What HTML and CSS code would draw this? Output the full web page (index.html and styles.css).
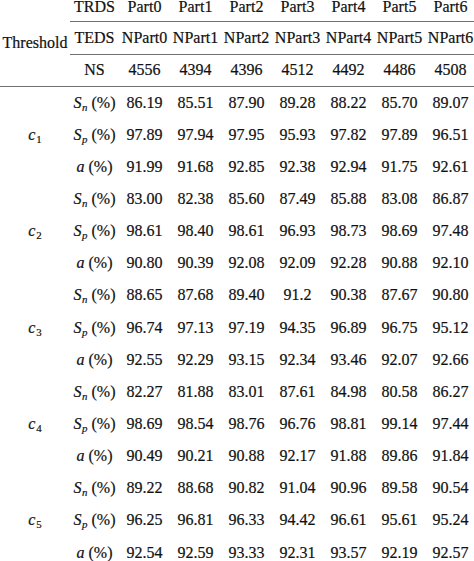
FILE: index.html
```html
<!DOCTYPE html>
<html lang="en">
<head>
<meta charset="utf-8">
<title>Threshold results</title>
<link rel="stylesheet" href="styles.css">
</head>
<body>
<table class="results">
  <colgroup>
    <col class="c-thr">
    <col class="c-lab">
    <col class="c-val"><col class="c-val"><col class="c-val"><col class="c-val"><col class="c-val"><col class="c-val"><col class="c-val">
  </colgroup>
  <thead>
    <tr class="h1">
      <th rowspan="3" class="thr">Threshold</th>
      <td>TRDS</td><td>Part0</td><td>Part1</td><td>Part2</td><td>Part3</td><td>Part4</td><td>Part5</td><td>Part6</td>
    </tr>
    <tr class="h2">
      <td>TEDS</td><td>NPart0</td><td>NPart1</td><td>NPart2</td><td>NPart3</td><td>NPart4</td><td>NPart5</td><td>NPart6</td>
    </tr>
    <tr class="h3">
      <td>NS</td><td>4556</td><td>4394</td><td>4396</td><td>4512</td><td>4492</td><td>4486</td><td>4508</td>
    </tr>
  </thead>
  <tbody>
    <tr><th rowspan="3" class="grp"><i>c</i><sub class="num">1</sub></th><td><i>S</i><sub class="ital">n</sub> (%)</td><td>86.19</td><td>85.51</td><td>87.90</td><td>89.28</td><td>88.22</td><td>85.70</td><td>89.07</td></tr>
    <tr><td><i>S</i><sub class="ital">p</sub> (%)</td><td>97.89</td><td>97.94</td><td>97.95</td><td>95.93</td><td>97.82</td><td>97.89</td><td>96.51</td></tr>
    <tr><td><i>a</i> (%)</td><td>91.99</td><td>91.68</td><td>92.85</td><td>92.38</td><td>92.94</td><td>91.75</td><td>92.61</td></tr>

    <tr><th rowspan="3" class="grp"><i>c</i><sub class="num">2</sub></th><td><i>S</i><sub class="ital">n</sub> (%)</td><td>83.00</td><td>82.38</td><td>85.60</td><td>87.49</td><td>85.88</td><td>83.08</td><td>86.87</td></tr>
    <tr><td><i>S</i><sub class="ital">p</sub> (%)</td><td>98.61</td><td>98.40</td><td>98.61</td><td>96.93</td><td>98.73</td><td>98.69</td><td>97.48</td></tr>
    <tr><td><i>a</i> (%)</td><td>90.80</td><td>90.39</td><td>92.08</td><td>92.09</td><td>92.28</td><td>90.88</td><td>92.10</td></tr>

    <tr><th rowspan="3" class="grp"><i>c</i><sub class="num">3</sub></th><td><i>S</i><sub class="ital">n</sub> (%)</td><td>88.65</td><td>87.68</td><td>89.40</td><td>91.2</td><td>90.38</td><td>87.67</td><td>90.80</td></tr>
    <tr><td><i>S</i><sub class="ital">p</sub> (%)</td><td>96.74</td><td>97.13</td><td>97.19</td><td>94.35</td><td>96.89</td><td>96.75</td><td>95.12</td></tr>
    <tr><td><i>a</i> (%)</td><td>92.55</td><td>92.29</td><td>93.15</td><td>92.34</td><td>93.46</td><td>92.07</td><td>92.66</td></tr>

    <tr><th rowspan="3" class="grp"><i>c</i><sub class="num">4</sub></th><td><i>S</i><sub class="ital">n</sub> (%)</td><td>82.27</td><td>81.88</td><td>83.01</td><td>87.61</td><td>84.98</td><td>80.58</td><td>86.27</td></tr>
    <tr><td><i>S</i><sub class="ital">p</sub> (%)</td><td>98.69</td><td>98.54</td><td>98.76</td><td>96.76</td><td>98.81</td><td>99.14</td><td>97.44</td></tr>
    <tr><td><i>a</i> (%)</td><td>90.49</td><td>90.21</td><td>90.88</td><td>92.17</td><td>91.88</td><td>89.86</td><td>91.84</td></tr>

    <tr><th rowspan="3" class="grp"><i>c</i><sub class="num">5</sub></th><td><i>S</i><sub class="ital">n</sub> (%)</td><td>89.22</td><td>88.68</td><td>90.82</td><td>91.04</td><td>90.96</td><td>89.58</td><td>90.54</td></tr>
    <tr><td><i>S</i><sub class="ital">p</sub> (%)</td><td>96.25</td><td>96.81</td><td>96.33</td><td>94.42</td><td>96.61</td><td>95.61</td><td>95.24</td></tr>
    <tr><td><i>a</i> (%)</td><td>92.54</td><td>92.59</td><td>93.33</td><td>92.31</td><td>93.57</td><td>92.19</td><td>92.57</td></tr>
  </tbody>
</table>
</body>
</html>
```

FILE: styles.css
```css
html, body {
  margin: 0;
  padding: 0;
  background: #ffffff;
}

body {
  overflow: hidden;
  font-family: "Liberation Serif", "Times New Roman", serif;
  font-size: 16px;
  color: #111111;
}

.results {
  border-collapse: collapse;
  table-layout: fixed;
  width: 476px;
}

.results td,
.results th {
  padding: 0;
  text-align: center;
  vertical-align: middle;
  white-space: nowrap;
  font-weight: normal;
  line-height: 18px;
  -webkit-text-stroke: 0.2px #111111;
}

.c-thr { width: 70px; }
.c-lab { width: 49px; }
.c-val { width: 51px; }

.h1 { height: 21px; }
.h2 { height: 33px; }
.h3 { height: 32.5px; }

.h1 td {
  line-height: 12px;
  padding-bottom: 7px;
}

.thr {
  padding-bottom: 9px;
}

.h1 td,
.h2 td,
.h3 td,
.thr {
  border-bottom: 1px solid #707070;
}

.results tbody tr { height: 32.15px; }

.results sub {
  font-size: 0.68em;
  line-height: 0;
  vertical-align: -0.28em;
}

.results sub.ital { font-style: italic; margin-left: 0.5px; }
.results sub.num { font-style: normal; margin-left: 1px; }
```
